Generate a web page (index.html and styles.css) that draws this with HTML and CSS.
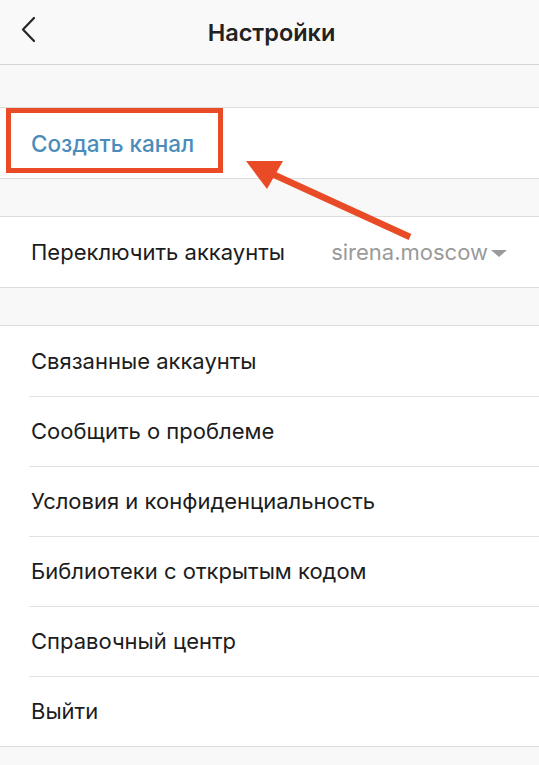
FILE: index.html
```html
<!DOCTYPE html>
<html lang="ru">
<head>
<meta charset="utf-8">
<link rel="stylesheet" href="styles.css">
</head>
<body>
<div class="screen">
  <header class="header">
    <svg class="back" width="20" height="30" viewBox="0 0 20 30"><polyline points="14,3 3,14.5 14,26" fill="none" stroke="#262626" stroke-width="2.2" stroke-linecap="round" stroke-linejoin="round"/></svg>
    <h1 class="title">Настройки</h1>
  </header>

  <div class="gap gap-first"></div>

  <section class="group">
    <div class="row row-highlight">
      <span class="link">Создать канал</span>
      <span class="mark"></span>
    </div>
  </section>

  <div class="gap"></div>

  <section class="group">
    <div class="row">
      <span class="label">Переключить аккаунты</span>
      <span class="account">sirena.moscow<span class="caret"></span></span>
    </div>
  </section>

  <div class="gap"></div>

  <section class="group">
    <div class="row"><span class="label">Связанные аккаунты</span></div>
    <div class="row"><span class="label">Сообщить о проблеме</span></div>
    <div class="row"><span class="label">Условия и конфиденциальность</span></div>
    <div class="row"><span class="label">Библиотеки с открытым кодом</span></div>
    <div class="row"><span class="label">Справочный центр</span></div>
    <div class="row"><span class="label">Выйти</span></div>
  </section>

  <svg class="arrow" width="539" height="765" viewBox="0 0 539 765">
    <line x1="410" y1="237" x2="268" y2="172" stroke="#e94b27" stroke-width="6.5"/>
    <polygon points="246,161 283,161 267,189" fill="#e94b27"/>
  </svg>
</div>
</body>
</html>
```

FILE: styles.css
```css
* { box-sizing: border-box; margin: 0; padding: 0; }

html, body {
  width: 539px;
  height: 765px;
  overflow: hidden;
}

body {
  background: #f8f8f8;
  font-family: Inter, "Liberation Sans", sans-serif;
  color: #1c1c1c;
}

.screen {
  position: relative;
  height: 765px;
}

.header {
  height: 65px;
  background: #f9f9f9;
  border-bottom: 1px solid #d4d4d4;
  display: flex;
  align-items: center;
  justify-content: center;
  position: relative;
}

.back {
  position: absolute;
  left: 20px;
  top: 15px;
}

.title {
  font-size: 23.5px;
  font-weight: 600;
  color: #222;
  margin-left: 4px;
}

.gap {
  height: 37px;
  background: #f8f8f8;
}

.gap-first {
  height: 42px;
}

.group {
  background: #fff;
  border-top: 1px solid #dcdcdc;
  border-bottom: 1px solid #dcdcdc;
}

.row {
  height: 70px;
  display: flex;
  align-items: center;
  justify-content: space-between;
  padding: 0 32px 0 31px;
  position: relative;
}

.group .row + .row::before {
  content: "";
  position: absolute;
  left: 29px;
  right: 0;
  top: 0;
  border-top: 1px solid #e2e2e2;
}

.label {
  font-size: 22px;
  color: #1c1c1c;
}

.link {
  font-size: 22.5px;
  font-weight: 500;
  color: #4a8cba;
}

.mark {
  position: absolute;
  left: 6px;
  top: 0;
  width: 217px;
  height: 65px;
  border: 5px solid #e94b27;
}

.account {
  font-size: 22px;
  color: #9a9a9a;
  display: flex;
  align-items: center;
}

.caret {
  display: inline-block;
  width: 0;
  height: 0;
  margin-left: 3px;
  margin-top: 2px;
  border-left: 8px solid transparent;
  border-right: 8px solid transparent;
  border-top: 7px solid #9a9a9a;
}

.arrow {
  position: absolute;
  left: 0;
  top: 0;
  pointer-events: none;
}
```
